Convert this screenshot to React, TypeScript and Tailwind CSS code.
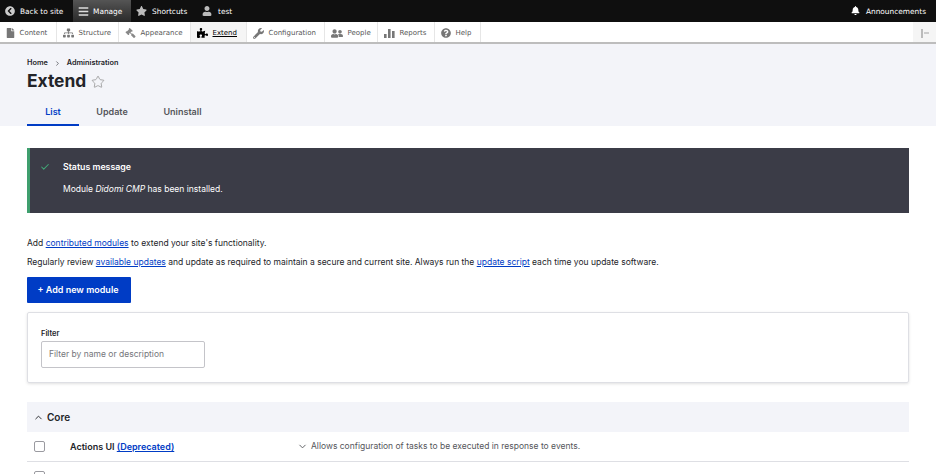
import { ChevronUp, ChevronDown, Check, Star } from 'lucide-react';
import {
  FaBars,
  FaBell,
  FaChevronCircleLeft,
  FaFile,
  FaPuzzlePiece,
  FaQuestionCircle,
  FaSitemap,
  FaStar,
  FaUser,
  FaUserFriends,
  FaWrench,
  FaGavel,
} from 'react-icons/fa';

const toolbarFont = "font-['DejaVu_Sans',sans-serif]";

function ReportsIcon() {
  return (
    <svg viewBox="0 0 11 9" className="w-[11px] h-[9px] text-[#777]" fill="currentColor">
      <rect x="0" y="5" width="2.6" height="4" />
      <rect x="4" y="0" width="2.6" height="9" />
      <rect x="8" y="2" width="2.6" height="7" />
    </svg>
  );
}

const menu = [
  { label: 'Content', icon: <FaFile className="w-[9px] h-[10px] text-[#777]" />, w: 'w-[57px]' },
  { label: 'Structure', icon: <FaSitemap className="w-[11px] h-[10px] text-[#777]" />, w: 'w-[62px]' },
  { label: 'Appearance', icon: <FaGavel className="w-[11px] h-[10px] text-[#888] -scale-x-100" />, w: 'w-[72px]' },
  { label: 'Extend', icon: <FaPuzzlePiece className="w-[11px] h-[10px] text-black" />, w: 'w-[56px]', active: true },
  { label: 'Configuration', icon: <FaWrench className="w-[11px] h-[11px] text-[#777]" />, w: 'w-[78px]' },
  { label: 'People', icon: <FaUserFriends className="w-[12px] h-[11px] text-[#777]" />, w: 'w-[53px]' },
  { label: 'Reports', icon: <ReportsIcon />, w: 'w-[57px]' },
  { label: 'Help', icon: <FaQuestionCircle className="w-[10px] h-[10px] text-[#777]" />, w: 'w-[46px]' },
];

export default function App() {
  return (
    <div className="w-[936px] h-[474px] overflow-hidden bg-white font-['Inter',sans-serif] text-[#232429]">
      {/* Top toolbar */}
      <div className={`h-[22px] bg-[#0f0f0f] flex items-center text-white text-[7.4px] ${toolbarFont}`}>
        <div className="flex items-center gap-[5px] pl-[5px] w-[73px] pt-[1px]">
          <FaChevronCircleLeft className="w-[10px] h-[10px] text-[#ccc] -mt-[1px]" />
          <span>Back to site</span>
        </div>
        <div className="flex items-center gap-[4px] pl-[5px] w-[58px] h-full pt-[1px] bg-gradient-to-b from-[#555] to-[#2a2a2a]">
          <FaBars className="w-[11px] h-[11px] text-[#ddd] -mt-[1px]" />
          <span>Manage</span>
        </div>
        <div className="flex items-center gap-[5px] pl-[5px] w-[66px] pt-[1px]">
          <FaStar className="w-[11px] h-[10px] text-[#bbb] -mt-[1px]" />
          <span>Shortcuts</span>
        </div>
        <div className="flex items-center gap-[6px] pl-[5px] pt-[1px]">
          <FaUser className="w-[10px] h-[10px] text-[#bbb] -mt-[1px]" />
          <span>test</span>
        </div>
        <div className="ml-auto flex items-center gap-[6px] pr-[10px] pt-[1px]">
          <FaBell className="w-[9px] h-[9px] text-white -mt-[1px]" />
          <span>Announcements</span>
        </div>
      </div>

      {/* Admin menu */}
      <div className={`h-[22px] bg-white border-b-2 border-[#bdbdbd] flex text-[7px] text-[#565656] ${toolbarFont}`}>
        {menu.map((item) => (
          <div
            key={item.label}
            className={`${item.w} flex items-center gap-[4.5px] pl-[6px] pt-[2px] border-r border-[#e6e6e6] ${
              item.active ? 'bg-[#f5f5f5] text-black underline' : ''
            }`}
          >
            {item.icon}
            <span>{item.label}</span>
          </div>
        ))}
        <div className="ml-auto w-[23px] bg-[#f5f5f5] flex items-center justify-center gap-[1px] pt-[2px]">
          <div className="w-[2px] h-[9px] bg-[#bbb]" />
          <div className="w-[5px] h-[2px] bg-[#ccc]" />
        </div>
      </div>

      {/* Page header */}
      <div className="h-[82px] bg-[#f3f4f9] pl-[27px] pt-[15px]">
        <div className="flex items-center h-[9px] text-[7.3px] font-semibold">
          <span>Home</span>
          <ChevronDown className="w-[7px] h-[7px] mx-[6px] -rotate-90" />
          <span>Administration</span>
        </div>
        <div className="flex items-center gap-[5px] mt-[3px] h-[20px]">
          <h1 className="text-[17.4px] font-bold leading-[20px]">Extend</h1>
          <Star className="w-[14px] h-[14px] text-[#888] mt-[1px]" strokeWidth={1.2} />
        </div>
        <div className="flex mt-[9px] h-[26px] text-[9px] font-semibold text-[#55565b]">
          <div className="w-[52px] flex items-center justify-center text-[#003cc5] border-b-2 border-[#003cc5]">List</div>
          <div className="w-[66px] flex items-center justify-center pb-[2px]">Update</div>
          <div className="w-[75px] flex items-center justify-center pb-[2px]">Uninstall</div>
        </div>
      </div>

      <div className="px-[27px] pt-[22px] text-[8.5px]">
        {/* Status message */}
        <div className="h-[65px] bg-[#3b3c47] border-l-[3px] border-[#3f9f6e] flex text-white">
          <Check className="w-[10px] h-[10px] text-[#42a877] ml-[10px] mt-[14px]" strokeWidth={2.5} />
          <div className="ml-[13px] pt-[13px]">
            <p className="font-semibold text-[8.8px] leading-[11px]">Status message</p>
            <p className="mt-[12px] leading-[11px]">
              Module <em>Didomi CMP</em> has been installed.
            </p>
          </div>
        </div>

        {/* Intro */}
        <p className="mt-[25px] leading-[11px]">
          Add <a className="text-[#003cc5] underline">contributed modules</a> to extend your site's functionality.
        </p>
        <p className="mt-[8px] leading-[11px]">
          Regularly review <a className="text-[#003cc5] underline">available updates</a> and update as required to
          maintain a secure and current site. Always run the <a className="text-[#003cc5] underline">update script</a>{' '}
          each time you update software.
        </p>

        <button className="mt-[9px] w-[104px] h-[26px] bg-[#003cc5] text-white text-[9px] font-semibold rounded-[1px] block pr-[2px]">
          + Add new module
        </button>

        {/* Filter card */}
        <div className="mt-[9px] h-[71px] border border-[#dedfe4] rounded-[2px] shadow-[0_1px_3px_rgba(0,0,0,0.12)] pl-[13px] pt-[16px]">
          <label className="block text-[7.5px] font-semibold leading-[9px]">Filter</label>
          <div className="mt-[3px] w-[164px] h-[27px] border border-[#c4c4c9] rounded-[2px] flex items-center pl-[7px] text-[8.5px] text-[#75767b]">
            Filter by name or description
          </div>
        </div>

        {/* Core section */}
        <div className="mt-[19px] h-[30px] bg-[#f3f4f9] flex items-center pl-[6px] gap-[3px]">
          <ChevronUp className="w-[11px] h-[11px]" />
          <span className="text-[10px] font-semibold">Core</span>
        </div>
        <div className="h-[30px] border-b border-[#dedfe4] flex items-center">
          <div className="ml-[7px] w-[11px] h-[11px] border border-[#9a9aa0] rounded-[2px]" />
          <div className="ml-[25px] w-[227px] text-[9px] font-semibold">
            Actions UI <a className="text-[#003cc5] underline">(Deprecated)</a>
          </div>
          <ChevronDown className="w-[11px] h-[11px] text-[#55565b]" />
          <span className="ml-[3px] text-[8.5px] text-[#55565b]">
            Allows configuration of tasks to be executed in response to events.
          </span>
        </div>
        <div className="h-[12px] pt-[9px]">
          <div className="ml-[7px] w-[11px] h-[11px] border border-[#9a9aa0] rounded-[2px]" />
        </div>
      </div>
    </div>
  );
}
